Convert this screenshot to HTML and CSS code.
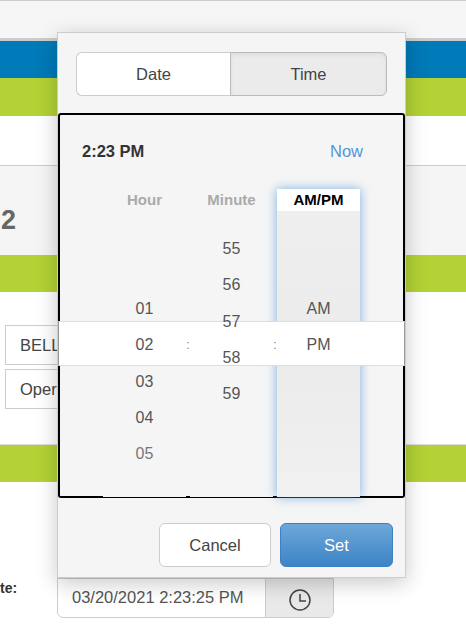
FILE: index.html
```html
<!DOCTYPE html>
<html lang="en">
<head>
<meta charset="utf-8">
<title>Date time picker</title>
<link rel="stylesheet" href="styles.css">
</head>
<body>
<div class="page">
  <div class="topbar"></div>
  <div class="band-blue"></div>
  <div class="band-green"></div>
  <div class="white-strip"></div>
  <div class="title-strip"><span class="title-num">2</span></div>
  <div class="band-green band-short"></div>
  <div class="form-block">
    <div class="field">BELL</div>
    <div class="field">Oper</div>
  </div>
  <div class="band-green band-lined"></div>
  <div class="date-row">
    <div class="date-label">te:</div>
    <div class="date-input">
      <div class="date-value">03/20/2021 2:23:25 PM</div>
      <div class="date-addon">
        <svg class="clock" width="24" height="24" viewBox="0 0 24 24" aria-hidden="true">
          <circle cx="12" cy="12" r="10" fill="none" stroke="#444" stroke-width="1.5"/>
          <path d="M12 6v7h6" fill="none" stroke="#444" stroke-width="1.5"/>
        </svg>
      </div>
    </div>
  </div>
</div>

<div class="popup">
  <div class="segment">
    <div class="seg-btn seg-date">Date</div>
    <div class="seg-btn seg-time">Time</div>
  </div>
  <div class="panel">
    <div class="band"></div>
    <div class="panel-head">
      <span class="current">2:23 PM</span>
      <span class="now">Now</span>
    </div>
    <div class="cols">
      <div class="col">
        <div class="col-head">Hour</div>
        <div class="list list-hour">
          <div class="item">01</div>
          <div class="item">02</div>
          <div class="item">03</div>
          <div class="item">04</div>
          <div class="item item-dim">05</div>
        </div>
      </div>
      <div class="sep"><div class="colon">:</div></div>
      <div class="col">
        <div class="col-head">Minute</div>
        <div class="list list-minute">
          <div class="item">55</div>
          <div class="item">56</div>
          <div class="item">57</div>
          <div class="item">58</div>
          <div class="item">59</div>
        </div>
      </div>
      <div class="sep"><div class="colon">:</div></div>
      <div class="col col-focus">
        <div class="col-head col-head-focus">AM/PM</div>
        <div class="list list-hour">
          <div class="item">AM</div>
          <div class="item">PM</div>
        </div>
      </div>
    </div>
  </div>
  <div class="footer">
    <div class="btn btn-cancel">Cancel</div>
    <div class="btn btn-set">Set</div>
  </div>
</div>
</body>
</html>
```
FILE: styles.css
```css
* { box-sizing: border-box; }

html, body {
  margin: 0;
  padding: 0;
  background: #fff;
}

body {
  position: relative;
  width: 466px;
  height: 643px;
  overflow: hidden;
  font-family: "Liberation Sans", Arial, sans-serif;
  font-size: 16px;
  color: #444;
}

/* Page behind the dialog */
.topbar {
  height: 41px;
  background: #f6f6f6;
  border-top: 1px solid #ccc;
  border-bottom: 3px solid #ccc;
}

.band-blue {
  height: 37px;
  background: #007ab8;
}

.band-green {
  height: 38px;
  background: #b2d235;
}

.band-short {
  height: 37px;
}

.band-lined {
  height: 38px;
  border-top: 1px solid #ddd;
}

.white-strip {
  height: 50px;
  background: #fff;
  border-bottom: 1px solid #ccc;
}

.title-strip {
  height: 89px;
  padding: 37px 0 0 1px;
  background: #f5f5f5;
}

.title-num {
  font-size: 27px;
  line-height: 34px;
  font-weight: 700;
  color: #666;
}

.form-block {
  height: 152px;
  padding: 33px 0 0 5px;
  display: flex;
  flex-direction: column;
  gap: 4px;
}

.field {
  width: 120px;
  height: 40px;
  padding-left: 14px;
  font-size: 16.5px;
  line-height: 38px;
  border: 1px solid #ccc;
  background: #fff;
  color: #444;
}

.date-row {
  display: flex;
  margin-top: 96px;
}

.date-label {
  width: 57px;
  padding-top: 1px;
  font-size: 14px;
  line-height: 18px;
  font-weight: 700;
  color: #333;
}

.date-input {
  display: flex;
  width: 277px;
  height: 40px;
  border: 1px solid #ccc;
  border-radius: 0 0 6px 6px;
}

.date-value {
  width: 208px;
  padding-left: 14px;
  font-size: 16.5px;
  line-height: 37px;
  color: #555;
  border-right: 1px solid #ccc;
}

.date-addon {
  flex: 1;
  display: flex;
  align-items: center;
  justify-content: center;
  padding-top: 4px;
  background: #e9e9e9;
  border-radius: 0 0 5px 0;
}

/* Dialog */
.popup {
  position: absolute;
  left: 57px;
  top: 32px;
  width: 349px;
  height: 546px;
  padding-top: 19px;
  background: #f5f5f5;
  border: 1px solid #ccc;
  box-shadow: 0 5px 20px rgba(0, 0, 0, 0.22);
}

.segment {
  display: flex;
  height: 44px;
  margin: 0 18px;
  font-size: 16.5px;
}

.seg-btn {
  display: flex;
  align-items: center;
  justify-content: center;
  color: #444;
}

.seg-date {
  width: 154px;
  background: #fff;
  border: 1px solid #ccc;
  border-right: 0;
  border-radius: 6px 0 0 6px;
}

.seg-time {
  flex: 1;
  background: #ebebeb;
  border: 1px solid #bbb;
  border-radius: 0 6px 6px 0;
  box-shadow: inset 0 2px 4px rgba(0, 0, 0, 0.06);
}

.panel {
  position: relative;
  height: 385px;
  margin-top: 17px;
  border: 2px solid #000;
  border-bottom-width: 1px;
  border-radius: 3px;
}

.panel::before,
.panel::after {
  content: "";
  position: absolute;
  bottom: 0;
  height: 1px;
  background: #000;
}

.panel::before {
  left: 0;
  width: 43px;
}

.panel::after {
  right: 0;
  width: 43px;
}

.band {
  position: absolute;
  z-index: 1;
  left: -2px;
  right: -2px;
  top: 206px;
  height: 45px;
  background: #fff;
  border-top: 1px solid #ddd;
  border-bottom: 1px solid #ddd;
  border-left: 1px solid #999;
  border-right: 1px solid #999;
}

.panel-head {
  display: flex;
  justify-content: space-between;
  height: 74px;
  padding: 26px 40px 0 22px;
  font-size: 16.5px;
  line-height: 20px;
}

.current {
  font-weight: 700;
  color: #333;
}

.now {
  color: #5295d3;
}

.cols {
  display: grid;
  grid-template-columns: 83px 4px 83px 4px 83px;
  height: 308px;
  padding-left: 43px;
}

.col {
  min-width: 0;
}

.col-head {
  height: 22px;
  line-height: 22px;
  text-align: center;
  font-size: 15px;
  font-weight: 700;
  color: #aaa;
}

.col-focus {
  background: linear-gradient(#efefef, #ebebeb 55%, #f1f1f1);
  box-shadow: 0 0 10px rgba(82, 150, 220, 0.75);
}

.col-head-focus {
  background: #fff;
  color: #000;
}

.list-hour {
  padding-top: 80px;
}

.list-minute {
  padding-top: 20px;
}

.item {
  position: relative;
  z-index: 2;
  height: 36.3px;
  line-height: 36.3px;
  text-align: center;
  color: #555;
}

.item-dim {
  color: #777;
}

.sep {
  border-bottom: 1px solid #000;
  padding-top: 138px;
}

.colon {
  position: relative;
  z-index: 2;
  height: 36px;
  line-height: 36px;
  text-align: center;
  font-size: 12px;
  color: #777;
  opacity: 0.99;
  will-change: opacity;
}

.footer {
  display: flex;
  justify-content: flex-end;
  gap: 9px;
  padding: 25px 12px 0 0;
  font-size: 16.5px;
}

.btn {
  height: 44px;
  padding-top: 1px;
  display: flex;
  align-items: center;
  justify-content: center;
  border-radius: 6px;
}

.btn-cancel {
  width: 112px;
  background: #fff;
  border: 1px solid #ccc;
  color: #444;
}

.btn-set {
  width: 113px;
  background: linear-gradient(#6ea7d9, #3c84c6);
  border: 1px solid #3b80bf;
  color: #fff;
}
```
